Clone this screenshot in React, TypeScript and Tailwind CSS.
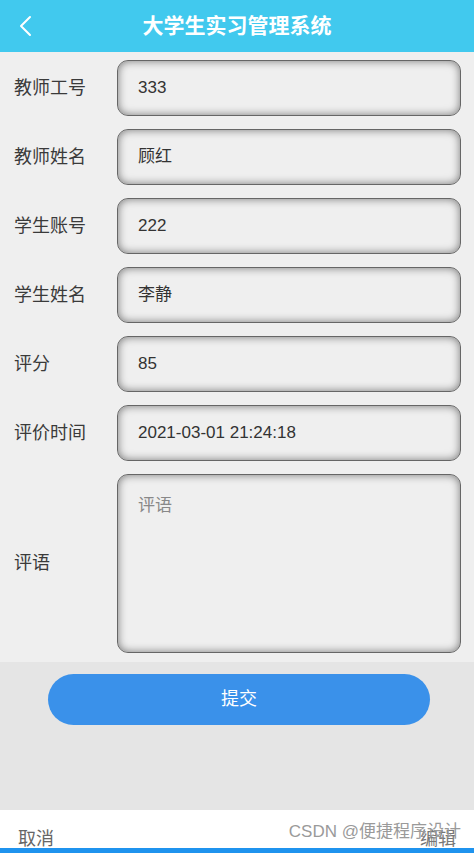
const fields = [
  { label: "教师工号", value: "333" },
  { label: "教师姓名", value: "顾红" },
  { label: "学生账号", value: "222" },
  { label: "学生姓名", value: "李静" },
  { label: "评分", value: "85" },
  { label: "评价时间", value: "2021-03-01 21:24:18" },
];

const font = { fontFamily: '"Liberation Sans", "Noto Sans CJK SC", sans-serif' };

export default function App() {
  return (
    <main className="relative flex h-[853px] w-full flex-col overflow-hidden bg-[#efefef] text-[#333]" style={font}>
      <header className="relative flex h-[52px] shrink-0 items-center justify-center bg-[#41c9ee]">
        <button className="absolute left-[14px] top-[11px] p-1">
          <svg width="14" height="22" viewBox="0 0 14 22" fill="none">
            <polyline points="12,2 3,11 12,20" stroke="white" strokeWidth="2" strokeLinecap="round" strokeLinejoin="round" />
          </svg>
        </button>
        <h1 className="text-[21px] font-bold text-white">大学生实习管理系统</h1>
      </header>

      <section className="flex flex-col gap-[13px] pb-[9px] pt-[8px]">
        {fields.map((f) => (
          <div key={f.label} className="flex items-center">
            <label className="w-[117px] shrink-0 pl-[14px] text-[18px] text-[#3a3a3a]">{f.label}</label>
            <div className="mr-[13px] flex h-[56px] flex-1 items-center rounded-[11px] border border-[#666] bg-[#efefef] pl-[20px] text-[17px] text-[#333] shadow-[inset_0_0_9px_rgba(0,0,0,0.5)]">
              {f.value}
            </div>
          </div>
        ))}
        <div className="flex items-center">
          <label className="w-[117px] shrink-0 pl-[14px] text-[18px] text-[#3a3a3a]">评语</label>
          <div className="mr-[13px] h-[179px] flex-1 rounded-[11px] border border-[#666] bg-[#efefef] pl-[20px] pt-[18px] text-[17px] text-[#888] shadow-[inset_0_0_9px_rgba(0,0,0,0.5)]">
            评语
          </div>
        </div>
      </section>

      <section className="h-[148px] shrink-0 bg-[#e5e5e5] pt-[12px]">
        <button className="ml-[48px] flex h-[51px] w-[382px] items-center justify-center rounded-full bg-[#3a91ea] text-[18px] text-white">
          提交
        </button>
      </section>

      <footer className="flex h-[38px] shrink-0 items-end justify-between bg-white px-[18px] text-[18px] leading-none text-[#666]">
        <span>取消</span>
        <span className="text-[#777]">编辑</span>
      </footer>
      <div className="h-[5px] shrink-0 bg-[#1f93ee]" />

      <div className="absolute bottom-[9px] right-[13px] text-[17px] text-[#9a9a9a]">CSDN @便捷程序设计</div>
    </main>
  );
}
